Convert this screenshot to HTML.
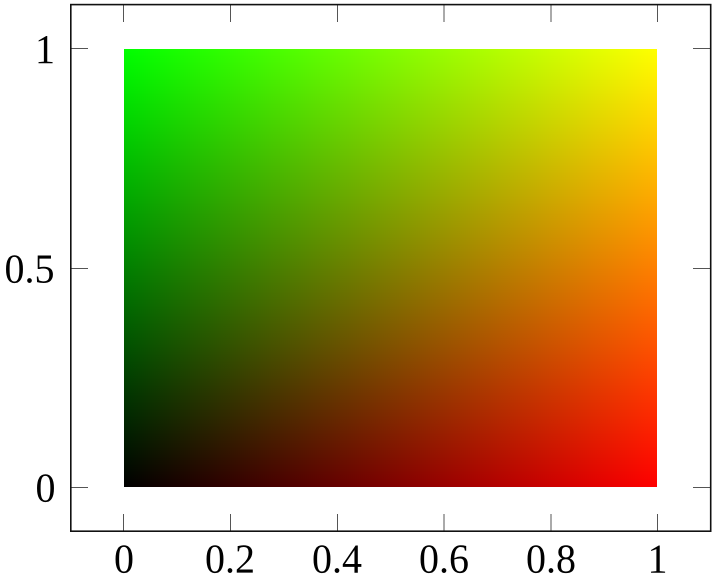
<!DOCTYPE html>
<html>
<head>
<meta charset="utf-8">
<style>
html,body{margin:0;padding:0;background:#fff;width:716px;height:578px;overflow:hidden}
#plot{position:absolute;left:124px;top:49px;width:533.3px;height:438px;background:#000;isolation:isolate}
#plot div{position:absolute;inset:0;mix-blend-mode:plus-lighter}
#r{background:linear-gradient(to right,#000,#f00)}
#g{background:linear-gradient(to top,#000,#0f0)}
svg{position:absolute;left:0;top:0}
text{font-family:"Liberation Serif",serif;font-size:40px;fill:#000}
</style>
</head>
<body>
<div id="plot"><div id="r"></div><div id="g"></div></div>
<svg width="716" height="578" viewBox="0 0 716 578">
<g stroke="#555" stroke-width="1" fill="none">
<path d="M123.5 514V531M230.5 514V531M337.5 514V531M444 514V531M551 514V531M657.5 514V531"/>
<path d="M123.5 5V22M230.5 5V22M337.5 5V22M444 5V22M551 5V22M657.5 5V22"/>
<path d="M71 48.5H88M71 268.5H88M71 487.5H88"/>
<path d="M693 48.5H710M693 268.5H710M693 487.5H710"/>
</g>
<rect x="70.8" y="4.6" width="639.9" height="526.6" fill="none" stroke="#111" stroke-width="1.6"/>
<g text-anchor="middle" transform="translate(0,572.5) scale(1,1.04)">
<text x="124" y="0">0</text>
<text x="230" y="0">0.2</text>
<text x="337" y="0">0.4</text>
<text x="444" y="0">0.6</text>
<text x="551" y="0">0.8</text>
<text x="657.5" y="0">1</text>
</g>
<g text-anchor="end">
<text x="55" y="0" transform="translate(0,63) scale(1,1.04)">1</text>
<text x="54.5" y="0" transform="translate(0,282.5) scale(1,1.04)">0.5</text>
<text x="55.5" y="0" transform="translate(0,501.5) scale(1,1.04)">0</text>
</g>
</svg>
</body>
</html>
